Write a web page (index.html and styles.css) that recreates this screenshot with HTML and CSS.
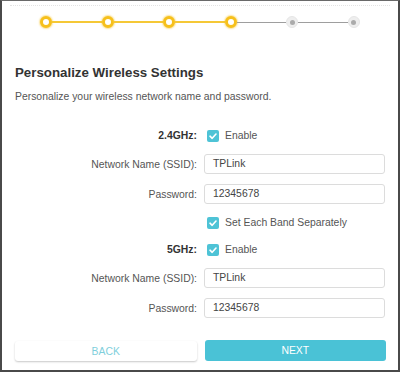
FILE: index.html
```html
<!DOCTYPE html>
<html>
<head>
<meta charset="utf-8">
<link rel="stylesheet" href="styles.css">
</head>
<body>
<div class="frame">
  <div class="topline"></div>
  <div class="steps">
    <span class="dot done"></span><span class="line done"></span>
    <span class="dot done"></span><span class="line done"></span>
    <span class="dot done"></span><span class="line done"></span>
    <span class="dot done"></span><span class="line"></span>
    <span class="dot"></span><span class="line"></span>
    <span class="dot"></span>
  </div>
  <h1 class="title">Personalize Wireless Settings</h1>
  <p class="subtitle">Personalize your wireless network name and password.</p>

  <div class="form">
    <div class="row cbrow">
      <span class="label strong">2.4GHz:</span>
      <label class="check"><span class="box"><svg viewBox="0 0 12 12" width="12" height="12"><path d="M3 6.2 L5.2 8.3 L9 4" fill="none" stroke="#fff" stroke-width="1.6" stroke-linecap="round" stroke-linejoin="round"/></svg></span>Enable</label>
    </div>
    <div class="row">
      <span class="label">Network Name (SSID):</span>
      <div class="input">TPLink</div>
    </div>
    <div class="row">
      <span class="label">Password:</span>
      <div class="input">12345678</div>
    </div>
    <div class="row cbrow">
      <span class="label"></span>
      <label class="check"><span class="box"><svg viewBox="0 0 12 12" width="12" height="12"><path d="M3 6.2 L5.2 8.3 L9 4" fill="none" stroke="#fff" stroke-width="1.6" stroke-linecap="round" stroke-linejoin="round"/></svg></span>Set Each Band Separately</label>
    </div>
    <div class="row cbrow">
      <span class="label strong">5GHz:</span>
      <label class="check"><span class="box"><svg viewBox="0 0 12 12" width="12" height="12"><path d="M3 6.2 L5.2 8.3 L9 4" fill="none" stroke="#fff" stroke-width="1.6" stroke-linecap="round" stroke-linejoin="round"/></svg></span>Enable</label>
    </div>
    <div class="row">
      <span class="label">Network Name (SSID):</span>
      <div class="input">TPLink</div>
    </div>
    <div class="row">
      <span class="label">Password:</span>
      <div class="input">12345678</div>
    </div>
  </div>

  <div class="buttons">
    <button class="btn back">BACK</button>
    <button class="btn next">NEXT</button>
  </div>
</div>
</body>
</html>
```
FILE: styles.css
```css
html, body {
  margin: 0;
  padding: 0;
  background: #fff;
}
body {
  font-family: "Liberation Sans", Arial, sans-serif;
  color: #444;
}
.frame {
  width: 400px;
  height: 372px;
  box-sizing: border-box;
  border: 2px solid #4a4a4a;
  border-top: 1px solid #6a6a6a;
  background: #fff;
  overflow: hidden;
}
.topline {
  margin: 4px 8px 0 8px;
  border-top: 1px dotted #e4e4e4;
}
.steps {
  display: flex;
  align-items: center;
  padding: 0 38px;
  margin-top: 10px;
  height: 12px;
}
.dot {
  flex: none;
  width: 12px;
  height: 12px;
  border-radius: 50%;
  box-sizing: border-box;
  background: #eeeeee;
  border: 1px solid #e6e6e6;
  display: flex;
  align-items: center;
  justify-content: center;
}
.dot::after {
  content: "";
  width: 5px;
  height: 5px;
  border-radius: 50%;
  background: #ababab;
}
.dot.done {
  background: #fff;
  border: 3px solid #f6c01c;
  box-shadow: 0 0 1.5px 1px rgba(246, 192, 28, 0.45);
}
.dot.done::after {
  display: none;
}
.line {
  flex: 1;
  height: 1px;
  background: #9e9e9e;
}
.line.done {
  height: 2px;
  background: #f5c836;
}
.title {
  margin: 37px 0 0 13px;
  font-size: 13.3px;
  font-weight: bold;
  color: #333;
  line-height: 16px;
}
.subtitle {
  margin: 9px 0 0 13px;
  font-size: 10.4px;
  color: #555;
  line-height: 14px;
}
.form {
  margin-top: 23px;
  display: flex;
  flex-direction: column;
  gap: 10px;
}
.row {
  display: grid;
  grid-template-columns: 195px 181px;
  column-gap: 7px;
  align-items: center;
  height: 20px;
}
.row.cbrow {
  height: 17px;
}
.label {
  text-align: right;
  font-size: 10.4px;
  color: #555;
}
.label.strong {
  font-weight: bold;
  color: #333;
}
.check {
  display: flex;
  align-items: center;
  font-size: 10.4px;
  color: #555;
  margin-left: 3px;
}
.box {
  width: 12px;
  height: 12px;
  border-radius: 2px;
  background: #4ec3d6;
  margin-right: 6px;
  display: flex;
}
.input {
  box-sizing: border-box;
  height: 20px;
  border: 1px solid #dcdcdc;
  border-radius: 3px;
  padding-left: 8px;
  font-size: 10.4px;
  color: #444;
  line-height: 18px;
}
.buttons {
  display: flex;
  gap: 8px;
  padding: 0 12px 0 13px;
  margin-top: 23px;
}
.btn {
  flex: 1;
  height: 20px;
  border-radius: 3px;
  font-family: "Liberation Sans", Arial, sans-serif;
  font-size: 10.4px;
  border: none;
  padding: 0;
}
.back {
  background: #fff;
  color: #7fcfdc;
  box-shadow: 0 1px 2px rgba(0, 0, 0, 0.22);
}
.next {
  height: 21px;
  margin-top: -1px;
  background: #4ac2d6;
  color: #fff;
}
```
